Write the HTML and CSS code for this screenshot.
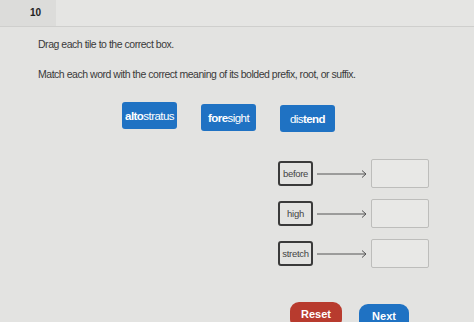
FILE: index.html
```html
<!DOCTYPE html>
<html>
<head>
<meta charset="utf-8">
<link rel="stylesheet" href="styles.css">
</head>
<body>
<div class="header"><span class="qnum">10</span></div>
<div class="content">
  <p class="instr first">Drag each tile to the correct box.</p>
  <p class="instr second">Match each word with the correct meaning of its bolded prefix, root, or suffix.</p>
  <div class="tiles">
    <div class="tile"><b>alto</b>stratus</div>
    <div class="tile t2"><b>fore</b>sight</div>
    <div class="tile t3">dis<b>tend</b></div>
  </div>
  <div class="pairs">
    <div class="pair">
      <div class="term">before</div>
      <svg class="arrow" width="52" height="12" viewBox="0 0 52 12"><path d="M0 6 H49 M45 2.5 L49 6 L45 9.5" fill="none" stroke="#555" stroke-width="1"/></svg>
      <div class="target"></div>
    </div>
    <div class="pair">
      <div class="term">high</div>
      <svg class="arrow" width="52" height="12" viewBox="0 0 52 12"><path d="M0 6 H49 M45 2.5 L49 6 L45 9.5" fill="none" stroke="#555" stroke-width="1"/></svg>
      <div class="target"></div>
    </div>
    <div class="pair">
      <div class="term">stretch</div>
      <svg class="arrow" width="52" height="12" viewBox="0 0 52 12"><path d="M0 6 H49 M45 2.5 L49 6 L45 9.5" fill="none" stroke="#555" stroke-width="1"/></svg>
      <div class="target"></div>
    </div>
  </div>
  <div class="buttons">
    <div class="btn reset">Reset</div>
    <div class="btn next">Next</div>
  </div>
</div>
</body>
</html>
```
FILE: styles.css
```css
html, body {
  margin: 0;
  padding: 0;
  width: 474px;
  height: 322px;
  overflow: hidden;
  background: #e3e3e1;
  font-family: "Liberation Sans", Arial, sans-serif;
  color: #3a3a3a;
}
.header {
  height: 26px;
  border-bottom: 1px solid #cfcfcd;
  background: linear-gradient(to right, #dcdcda 0, #dcdcda 56px, #e5e5e3 56px);
  display: flex;
  align-items: center;
  padding-left: 30px;
}
.qnum {
  font-size: 10px;
  font-weight: bold;
  color: #222;
  margin-top: -2px;
}
.content {
  padding-left: 38px;
}
.instr {
  margin: 0;
  font-size: 10.5px;
  letter-spacing: -0.47px;
  color: #3a3a3a;
}
.instr.first { margin-top: 11px; }
.instr.second { margin-top: 18px; }
.tiles {
  display: flex;
  margin-top: 22px;
  margin-left: 84px;
  gap: 24px;
  align-items: flex-start;
}
.tile {
  width: 55px;
  height: 27px;
  background: #1f72c3;
  color: #fff;
  border-radius: 3px;
  font-size: 11.5px;
  letter-spacing: -0.55px;
  display: flex;
  align-items: center;
  justify-content: center;
}
.tile.t2 { margin-top: 2px; }
.tile.t3 { margin-top: 3px; }
.pairs {
  margin-top: 27px;
  margin-left: 240px;
  display: flex;
  flex-direction: column;
  gap: 11px;
}
.pair {
  display: flex;
  align-items: center;
}
.term {
  box-sizing: border-box;
  width: 35px;
  height: 25px;
  border: 2px solid #3a3a3a;
  border-radius: 3px;
  font-size: 9.5px;
  letter-spacing: -0.3px;
  display: flex;
  align-items: center;
  justify-content: center;
  color: #444;
}
.arrow {
  margin-left: 4px;
  margin-right: 2px;
}
.target {
  box-sizing: border-box;
  width: 58px;
  height: 29px;
  border: 1px solid #bdbdbb;
  border-radius: 2px;
  background: #e8e8e6;
}
.buttons {
  display: flex;
  gap: 17px;
  margin-top: 34px;
  margin-left: 252px;
  align-items: flex-start;
}
.btn {
  width: 52px;
  height: 26px;
  border-radius: 9px;
  color: #fff;
  font-weight: bold;
  font-size: 11px;
  display: flex;
  align-items: center;
  justify-content: center;
}
.reset { background: #b83b2e; padding-bottom: 2px; box-sizing: border-box; }
.next {
  background: #1f72c3;
  width: 50px;
  margin-top: 2px;
  box-sizing: border-box;
  height: 26px;
  padding-bottom: 3px;
}
```
